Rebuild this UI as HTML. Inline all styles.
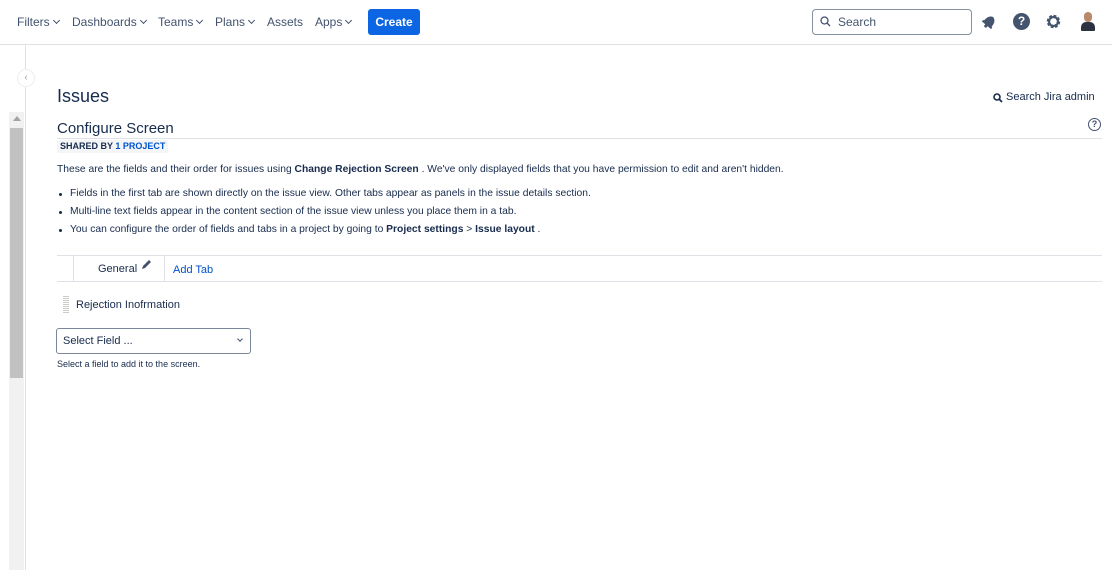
<!DOCTYPE html>
<html><head><meta charset="utf-8"><style>
*{margin:0;padding:0;box-sizing:border-box}
body{width:1112px;height:570px;overflow:hidden;background:#fff;font-family:"Liberation Sans",sans-serif;color:#172b4d;position:relative}
.a{position:absolute;white-space:nowrap}
.nav{font-size:12px;color:#42526e;top:15px}
.car{display:inline-block;width:5px;height:5px;border-right:1.5px solid #42526e;border-bottom:1.5px solid #42526e;transform:rotate(45deg);margin-left:4px;position:relative;top:-3px}
.t{font-size:10.3px;color:#172b4d}
.b{position:absolute;left:59px;width:3px;height:3px;border-radius:50%;background:#172b4d}
</style></head><body>
<div class="a" style="left:0;top:44px;width:1112px;height:1px;background:#dfe1e6"></div>
<div class="a nav" style="left:17px">Filters<span class="car"></span></div>
<div class="a nav" style="left:72px">Dashboards<span class="car"></span></div>
<div class="a nav" style="left:158px">Teams<span class="car"></span></div>
<div class="a nav" style="left:215px">Plans<span class="car"></span></div>
<div class="a nav" style="left:267px">Assets</div>
<div class="a nav" style="left:315px">Apps<span class="car"></span></div>
<div class="a" style="left:368px;top:9px;width:52px;height:26px;background:#0c66e4;border-radius:3px;color:#fff;font-size:12px;font-weight:bold;text-align:center;line-height:26px">Create</div>
<div class="a" style="left:812px;top:9px;width:160px;height:26px;border:1px solid #8590a2;border-radius:4px"></div>
<svg class="a" style="left:820px;top:16px" width="11" height="11"><circle cx="4.5" cy="4.5" r="3.5" fill="none" stroke="#44546f" stroke-width="1.3"/><path d="M7 7l3 3" stroke="#44546f" stroke-width="1.3"/></svg>
<div class="a" style="left:838px;top:15px;font-size:12px;color:#44546f">Search</div>
<svg class="a" style="left:981px;top:12px" width="18" height="18"><g transform="rotate(40 9 9)"><path d="M4 13 Q4 5 9 4 Q14 5 14 13Z" fill="#44546f"/><rect x="3" y="12.5" width="12" height="2" fill="#44546f"/><circle cx="9" cy="15.5" r="1.6" fill="#44546f"/></g></svg>
<div class="a" style="left:1013px;top:13px;width:17px;height:17px;border-radius:50%;background:#44546f;color:#fff;font-size:12px;font-weight:bold;text-align:center;line-height:17px">?</div>
<svg class="a" style="left:1045px;top:13px" width="17" height="17"><circle cx="8.5" cy="8.5" r="5" fill="none" stroke="#44546f" stroke-width="3.5" stroke-dasharray="2.5 1.4"/><circle cx="8.5" cy="8.5" r="4.5" fill="none" stroke="#44546f" stroke-width="2"/></svg>
<div class="a" style="left:1080px;top:12px;width:16px;height:20px;"><div style="position:absolute;left:4px;top:0;width:8px;height:10px;border-radius:4px;background:#b88a6a"></div><div style="position:absolute;left:1px;top:10px;width:14px;height:9px;border-radius:5px 5px 1px 1px;background:#2c3340"></div></div>

<div class="a" style="left:25px;top:45px;width:1px;height:525px;background:#dfe1e6"></div>
<div class="a" style="left:17px;top:69px;width:18px;height:18px;border-radius:50%;background:#fff;border:1px solid #eee;color:#97a0af;font-size:10px;text-align:center;line-height:16px">‹</div>
<div class="a" style="left:9px;top:112px;width:15px;height:458px;background:#f1f1f1"></div>
<div class="a" style="left:13px;top:116px;width:0;height:0;border-left:4px solid transparent;border-right:4px solid transparent;border-bottom:5px solid #a3a3a3"></div>
<div class="a" style="left:10px;top:128px;width:13px;height:250px;background:#c1c1c1"></div>

<div class="a" style="left:57px;top:86px;font-size:18px;color:#172b4d">Issues</div>
<svg class="a" style="left:993px;top:93px" width="10" height="10"><circle cx="4" cy="4" r="3" fill="none" stroke="#172b4d" stroke-width="1.6"/><path d="M6 6l3 3" stroke="#172b4d" stroke-width="1.8"/></svg>
<div class="a" style="left:1006px;top:91px;font-size:11px">Search Jira admin</div>
<div class="a" style="left:57px;top:120px;font-size:15px">Configure Screen</div>
<div class="a" style="left:1088px;top:118px;width:13px;height:13px;border:1.3px solid #42526e;border-radius:50%;font-size:9px;font-weight:bold;text-align:center;line-height:11px;color:#42526e">?</div>
<div class="a" style="left:57px;top:138px;width:1045px;height:1px;background:#dfe1e6"></div>
<div class="a" style="left:57px;top:140px;height:13px;padding:0 3px;background:#f4f5f7;border-radius:2px;font-size:9px;font-weight:bold;line-height:13px">SHARED BY <span style="color:#0052cc">1 PROJECT</span></div>
<div class="a t" style="left:57px;top:164px">These are the fields and their order for issues using <b>Change Rejection Screen</b> . We've only displayed fields that you have permission to edit and aren't hidden.</div>
<div class="b" style="top:193px"></div><div class="a t" style="left:70px;top:188px">Fields in the first tab are shown directly on the issue view. Other tabs appear as panels in the issue details section.</div>
<div class="b" style="top:211px"></div><div class="a t" style="left:70px;top:206px">Multi-line text fields appear in the content section of the issue view unless you place them in a tab.</div>
<div class="b" style="top:229px"></div><div class="a t" style="left:70px;top:224px">You can configure the order of fields and tabs in a project by going to <b>Project settings</b> &gt; <b>Issue layout</b> .</div>

<div class="a" style="left:57px;top:255px;width:1045px;height:1px;background:#dfe1e6"></div>
<div class="a" style="left:57px;top:281px;width:1045px;height:1px;background:#dfe1e6"></div>
<div class="a" style="left:73px;top:256px;width:92px;height:25px;border-left:1px solid #dfe1e6;border-right:1px solid #dfe1e6;background:#fff"></div>
<div class="a" style="left:98px;top:263px;font-size:11px;color:#172b4d">General</div>
<svg class="a" style="left:140px;top:259px" width="12" height="12"><path d="M2 10 L3 7 L9 1 L11 3 L5 9Z" fill="#42526e"/></svg>
<div class="a" style="left:173px;top:264px;font-size:11px;color:#0052cc">Add Tab</div>
<div class="a" style="left:63px;top:296px;width:6px;height:17px;background:repeating-linear-gradient(#ccc 0 1px,#fff 1px 2px)"></div>
<div class="a" style="left:76px;top:299px;font-size:11px">Rejection Inofrmation</div>
<div class="a" style="left:56px;top:328px;width:195px;height:26px;border:1px solid #7a869a;border-radius:3px"></div>
<div class="a" style="left:63px;top:335px;font-size:11px">Select Field ...</div>
<div class="a" style="left:238px;top:337px;width:4px;height:4px;border-right:1.2px solid #42526e;border-bottom:1.2px solid #42526e;transform:rotate(45deg)"></div>
<div class="a" style="left:57px;top:359px;font-size:9px">Select a field to add it to the screen.</div>
</body></html>
